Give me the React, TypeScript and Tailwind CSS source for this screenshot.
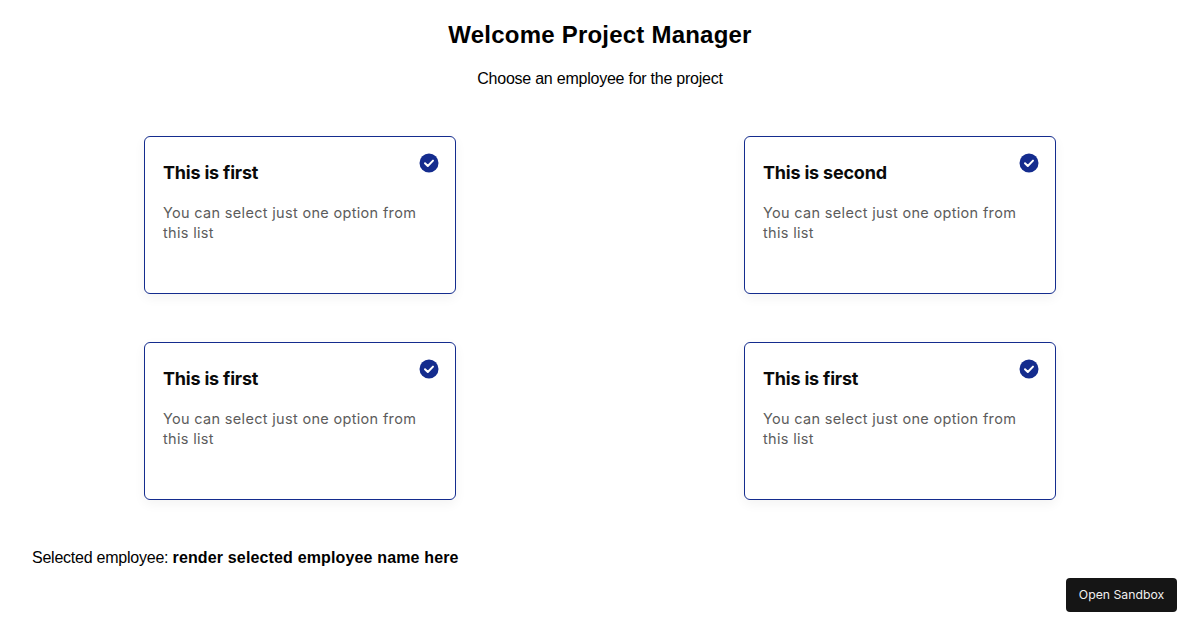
const CARDS = ["This is first", "This is second", "This is first", "This is first"];

function CheckBadge() {
  return (
    <svg className="absolute right-[16px] top-[16px]" width="20" height="20" viewBox="0 0 20 20" fill="none">
      <circle cx="10" cy="10" r="9.5" fill="#142c8e" />
      <path d="M6 10.2l2.8 2.8L14 7.6" stroke="#fff" strokeWidth="2" strokeLinecap="round" strokeLinejoin="round" />
    </svg>
  );
}

function Card({ title }: { title: string }) {
  return (
    <div className="relative h-[158px] w-[312px] rounded-[6px] border border-[#142c8e] bg-white px-[18px] pt-[24px] shadow-[0_4px_12px_rgba(0,0,0,0.05)]">
      <CheckBadge />
      <h2 className="font-['Inter',sans-serif] text-[18px] leading-[24px] font-bold tracking-[-0.2px] text-[#0a0a0a]">{title}</h2>
      <p className="mt-[18px] font-['Inter',sans-serif] text-[14.5px] leading-[20px] tracking-[0.32px] text-[#5c5c5c]">
        You can select just one option from this list
      </p>
    </div>
  );
}

export default function App() {
  return (
    <div className="relative h-[630px] w-full bg-white font-['Liberation_Sans',sans-serif] text-black">
      <h1 className="pt-[21px] text-center text-[24px] leading-[28px] font-bold tracking-[0.22px]">Welcome Project Manager</h1>
      <p className="mt-[21px] text-center text-[16px] leading-[18px] tracking-[-0.235px]">Choose an employee for the project</p>
      <div className="mt-[48px] grid grid-cols-2 gap-y-[48px]">
        {CARDS.map((title, i) => (
          <div key={i} className="flex justify-center">
            <Card title={title} />
          </div>
        ))}
      </div>
      <p className="mt-[49px] pl-[32px] text-[16px] leading-[18px] tracking-[-0.235px]">
        Selected employee: <b className="tracking-[0.15px]">render selected employee name here</b>
      </p>
      <button className="absolute top-[578px] right-[23px] h-[34px] w-[111px] rounded-[4px] bg-[#151515] font-['Inter',sans-serif] text-[12.25px] text-[#f0f0f0]">
        Open Sandbox
      </button>
    </div>
  );
}
